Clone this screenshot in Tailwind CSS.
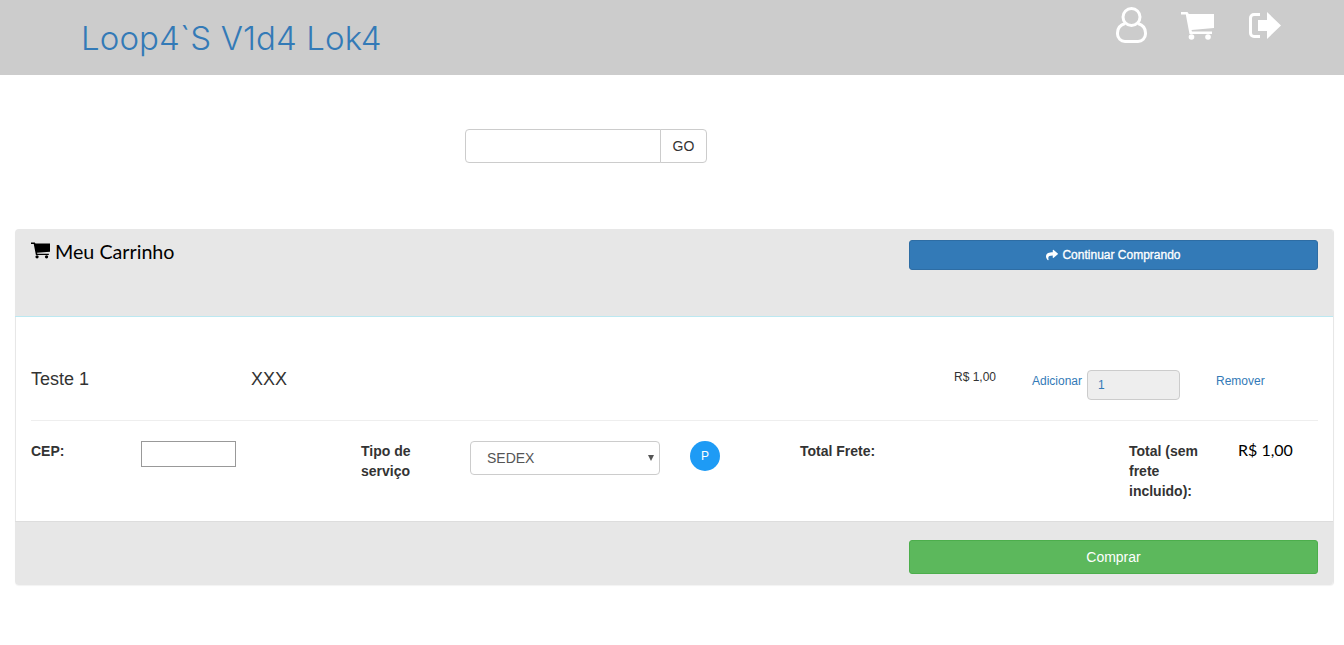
<!doctype html>
<html lang="pt">
<head>
<meta charset="utf-8">
<title>Loop4`S V1d4 Lok4</title>
<script src="https://cdn.jsdelivr.net/npm/@tailwindcss/browser@4"></script>
</head>
<body class="bg-white font-['Liberation_Sans',Arial,sans-serif] text-[#333] text-[14px] h-[645px] overflow-hidden">
<header class="h-[75px] bg-[#cccccc] flex items-start">
  <a class="ml-[81px] mt-[16px] text-[33px] leading-[44px] font-light text-[#337ab7] font-['Inter',sans-serif] tracking-[0.12px]">Loop4`S V1d4 Lok4</a>
  <div class="ml-auto mr-[63px] mt-[7px] flex items-start">
    <svg class="w-[31px] h-[36px]" viewBox="0 0 31 36" fill="none" stroke="#fff" stroke-width="3"><circle cx="15.5" cy="10" r="8.500"/><path d="M9 16.500C4 18 1.500 21.500 1.500 26v1A7.500 7.500 0 0 0 9 34.500h13a7.500 7.500 0 0 0 7.500-7.500v-1C29.500 21.500 27 18 22 16.500"/></svg>
    <svg class="ml-[34px] mt-[5px] w-[33px] h-[28px]" viewBox="0 0 33 28" fill="#fff"><path d="M0 0h6.500l1.300 2H33v14L10.500 18l.5 1.500H31V22H8.500L4.800 2.500H0z"/><circle cx="10.500" cy="25" r="2.800"/><circle cx="27" cy="25" r="2.800"/></svg>
    <svg class="ml-[35px] mt-[5px] w-[32px] h-[27px]" viewBox="0 0 32 27" fill="#fff"><path d="M11 2.500H5A3.500 3.500 0 0 0 1.500 6v15A3.500 3.500 0 0 0 5 24.500h6" fill="none" stroke="#fff" stroke-width="3"/><path d="M9 8h9V0l14 13.500L18 27v-8H9z"/></svg>
  </div>
</header>

<div class="mt-[54px] ml-[465px] flex w-[242px] h-[34px]">
  <input type="text" class="w-[196px] h-full bg-white border border-[#ccc] rounded-l-[4px] outline-none">
  <button class="w-[47px] -ml-px h-full bg-white border border-[#ccc] rounded-r-[4px] text-[#333] text-[14px]">GO</button>
</div>

<section class="mt-[66px] ml-[15px] w-[1319px] h-[356px] rounded-[4px] bg-white border-r border-[#e7e7e7] shadow-[0_1px_1px_rgba(0,0,0,0.05)] flex flex-col overflow-hidden">
  <div class="h-[88px] shrink-0 bg-[#e7e7e7] border-b border-[#bce8f1] flex items-start justify-between pl-[16px] pr-[15px] pt-[11px]">
    <h3 class="flex items-center text-black text-[19.7px] leading-[24px] font-['Lato',sans-serif]">
      <svg class="w-[19px] h-[19px] mr-[5px] -mt-[4px]" viewBox="0 0 33 28" fill="#000"><path d="M0 0h6.500l1.300 2H33v14L10.500 18l.5 1.500H31V22H8.500L4.800 2.500H0z"/><circle cx="10.500" cy="25" r="2.800"/><circle cx="27" cy="25" r="2.800"/></svg>
      Meu Carrinho
    </h3>
    <button class="w-[409px] h-[30px] bg-[#337ab7] border border-[#2e6da4] rounded-[3px] text-white text-[12px] [-webkit-text-stroke:0.3px_white] flex items-center justify-center">
      <svg class="w-[12px] h-[12px] mr-[4px]" viewBox="0 0 512 512" fill="#fff"><path d="M503.691 189.836L327.687 37.851C312.281 24.546 288 35.347 288 56.015v80.053C127.371 137.907 0 170.100 0 322.326c0 61.441 39.581 122.309 83.333 154.132 13.654 9.931 33.112-2.533 28.077-18.631C66.066 312.814 132.917 274.316 288 272.085V360c0 20.700 24.300 31.453 39.687 18.164l176.004-152c11.071-9.562 11.086-26.753 0-36.328z"/></svg>
      Continuar Comprando
    </button>
  </div>

  <div class="flex-1 border-l border-[#e7e7e7] pl-[15px] pr-[15px]">
    <div class="h-[104px] border-b border-[#eee] relative flex items-start">
      <span class="w-[220px] mt-[52px] text-[18px] leading-[20px] text-[#333]">Teste 1</span>
      <span class="w-[703px] mt-[52px] text-[18px] leading-[20px] text-[#333]">XXX</span>
      <span class="w-[78px] mt-[52px] text-[12px] leading-[17px] text-[#333]">R$ 1,00</span>
      <a class="w-[55px] mt-[56px] text-[12px] leading-[17px] text-[#337ab7]">Adicionar</a>
      <input type="text" value="1" disabled class="w-[93px] h-[30px] mt-[53px] px-[10px] bg-[#eeeeee] border border-[#ccc] rounded-[4px] text-[12px] text-[#337ab7]">
      <a class="ml-[36px] mt-[56px] text-[12px] leading-[17px] text-[#337ab7]">Remover</a>
    </div>
    <div class="flex items-start pt-[20px] font-bold">
      <label class="w-[110px] leading-[20px] text-[#333]">CEP:</label>
      <input type="text" class="w-[95px] h-[26px] bg-white border border-[#999] outline-none">
      <label class="w-[84px] ml-[125px] leading-[20px] text-[#333]">Tipo de serviço</label>
      <div class="relative ml-[25px] w-[190px] h-[34px] bg-white border border-[#ccc] rounded-[4px] font-normal flex items-center pl-[16px] text-[#555]">
        SEDEX
        <span class="absolute right-[5px] top-[13px] w-0 h-0 border-x-[3px] border-x-transparent border-t-[6px] border-t-[#555]"></span>
      </div>
      <button class="ml-[30px] w-[30px] h-[30px] rounded-full bg-[#1e9bf5] text-white text-[12px] font-normal flex items-center justify-center">P</button>
      <label class="ml-[80px] w-[329px] leading-[20px] text-[#333]">Total Frete:</label>
      <label class="w-[75px] mr-[34px] leading-[20px] text-[#333]">Total (sem frete incluido):</label>
      <span class="-mt-[2px] text-[16px] leading-[22px] font-normal text-black font-['Lato',sans-serif]">R$ 1,00</span>
    </div>
  </div>

  <div class="h-[64px] shrink-0 bg-[#e7e7e7] border-t border-[#ddd] flex items-start justify-end pr-[15px] pt-[18px]">
    <button class="w-[409px] h-[34px] bg-[#5cb85c] border border-[#4cae4c] rounded-[3px] text-white text-[14px]">Comprar</button>
  </div>
</section>
</body>
</html>
